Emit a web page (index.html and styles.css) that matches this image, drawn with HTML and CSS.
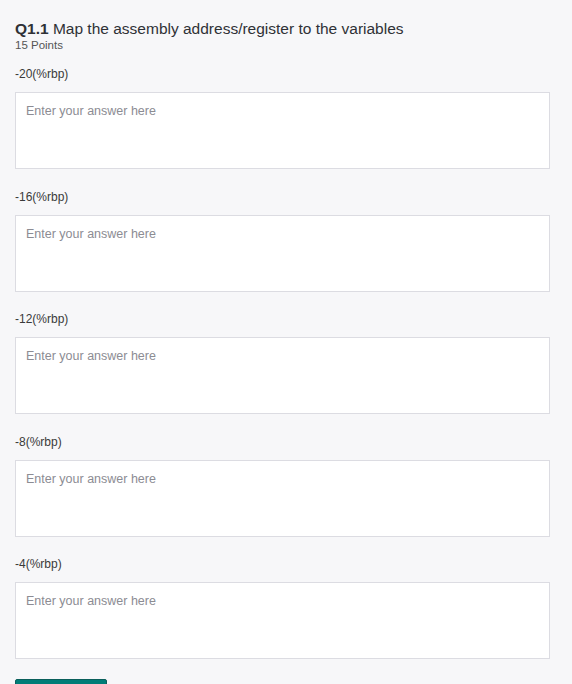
FILE: index.html
```html
<!DOCTYPE html>
<html>
<head>
<meta charset="utf-8">
<link rel="stylesheet" href="styles.css">
</head>
<body>
<div class="question">
  <div class="q-head">
    <div class="q-title"><strong>Q1.1</strong> Map the assembly address/register to the variables</div>
    <div class="q-points">15 Points</div>
  </div>
  <div class="field">
    <label class="field-label">-20(%rbp)</label>
    <textarea class="answer" placeholder="Enter your answer here"></textarea>
  </div>
  <div class="field">
    <label class="field-label">-16(%rbp)</label>
    <textarea class="answer" placeholder="Enter your answer here"></textarea>
  </div>
  <div class="field">
    <label class="field-label">-12(%rbp)</label>
    <textarea class="answer" placeholder="Enter your answer here"></textarea>
  </div>
  <div class="field">
    <label class="field-label">-8(%rbp)</label>
    <textarea class="answer" placeholder="Enter your answer here"></textarea>
  </div>
  <div class="field">
    <label class="field-label">-4(%rbp)</label>
    <textarea class="answer" placeholder="Enter your answer here"></textarea>
  </div>
  <button class="save-btn" type="button"></button>
</div>
</body>
</html>
```
FILE: styles.css
```css
html, body {
  margin: 0;
  padding: 0;
  background: #f7f7f9;
}
body {
  font-family: "Liberation Sans", Arial, sans-serif;
  color: #333;
}
.question {
  padding: 20px 22px 0 15px;
  display: flex;
  flex-direction: column;
}
.q-title {
  font-size: 15.5px;
  line-height: 18px;
  color: #2f3136;
}
.q-title strong {
  font-weight: 700;
}
.q-points {
  font-size: 11.5px;
  line-height: 14px;
  color: #555;
}
.field {
  display: flex;
  flex-direction: column;
  margin-top: 15px;
}
.field + .field {
  margin-top: 20.5px;
}
.field-label {
  font-size: 12px;
  line-height: 14px;
  color: #3a3a3a;
  margin-bottom: 11px;
}
.answer {
  box-sizing: border-box;
  width: 535px;
  height: 77px;
  border: 1px solid #dcdce2;
  background: #fff;
  padding: 11px 10px 9px;
  font-family: "Liberation Sans", Arial, sans-serif;
  font-size: 12.5px;
  resize: none;
  outline: none;
  margin: 0;
  display: block;
}
.answer::placeholder {
  color: #8c8c93;
}
.save-btn {
  margin-top: 20px;
  width: 92px;
  height: 30px;
  background: #007d78;
  border: 1px solid #0a5f5b;
  border-radius: 2px;
  padding: 0;
}
```
